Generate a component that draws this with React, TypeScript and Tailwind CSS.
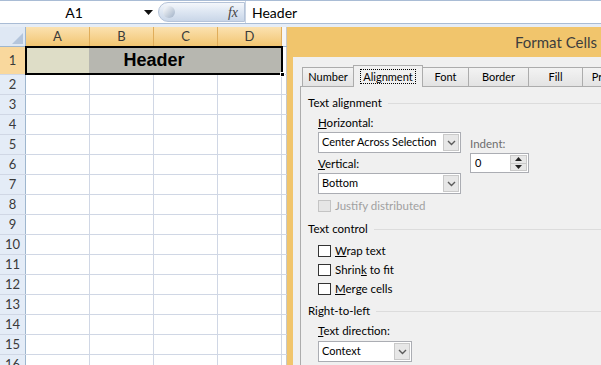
import React from 'react';

const COLS = ['A', 'B', 'C', 'D'];
const ROWS = [2, 3, 4, 5, 6, 7, 8, 9, 10, 11, 12, 13, 14, 15, 16];

const Chevron = () => (
  <svg width="9" height="6" viewBox="0 0 9 6">
    <path d="M1 1 L4.5 4.5 L8 1" fill="none" stroke="#5c5c5c" strokeWidth="1.4" />
  </svg>
);

const Select = ({ value, width }: { value: string; width: string }) => (
  <div className={`${width} h-[21px] flex border border-[#abadb3] bg-white`}>
    <div className="flex-1 flex items-center pl-[3px] text-[11px] text-black whitespace-nowrap overflow-hidden">{value}</div>
    <div className="w-[16px] m-px flex items-center justify-center bg-[#e7e7e7] border border-[#c9c9c9]">
      <Chevron />
    </div>
  </div>
);

const Group = ({ title, mt }: { title: string; mt: string }) => (
  <div className={`flex items-center h-[16px] shrink-0 ${mt}`}>
    <span>{title}</span>
    <div className="flex-1 h-px bg-[#dcdcdc] ml-[6px]" />
  </div>
);

const Check = ({ children, disabled, mt }: { children: React.ReactNode; disabled?: boolean; mt: string }) => (
  <div className={`flex items-center h-[14px] shrink-0 ml-[10px] ${mt}`}>
    <div
      className={`w-[13px] h-[12px] border ${disabled ? 'border-[#c4c4c4] bg-[#e6e6e6]' : 'border-[#333] bg-white'}`}
    />
    <span className={`ml-[4px] ${disabled ? 'text-[#a0a0a0]' : 'text-black'}`}>{children}</span>
  </div>
);

const Tab = ({ label, w, active }: { label: string; w: string; active?: boolean }) =>
  active ? (
    <div className={`${w} h-[22px] -ml-px -mb-px relative z-10 bg-[#f0f0f0] border border-b-0 border-[#acacac] flex items-center justify-center`}>
      <span className="outline-1 outline-dotted outline-black px-[2px] leading-[13px]">{label}</span>
    </div>
  ) : (
    <div className={`${w} h-[19px] -ml-px shrink-0 bg-gradient-to-b from-[#f3f3f3] to-[#e3e3e3] border border-b-0 border-[#acacac] flex items-center justify-center`}>
      {label}
    </div>
  );

export default function App() {
  return (
    <div className="w-[601px] h-[365px] overflow-hidden flex flex-col bg-[#e6edf6] font-['Lato',sans-serif] text-[#222]">
      {/* formula bar */}
      <div className="h-[24px] shrink-0 flex bg-white border-t border-b border-[#a9bcd5]">
        <div className="w-[158px] flex items-center relative">
          <div className="flex-1 text-center text-[14px] pl-[4px] text-black">A1</div>
          <svg width="9" height="5" viewBox="0 0 9 5" className="mr-[5px]">
            <path d="M0 0 H9 L4.5 5 Z" fill="#111" />
          </svg>
        </div>
        <div className="w-[87px] my-[1px] flex items-center rounded-l-full border border-[#b5c3d8] bg-gradient-to-b from-[#f4f7fb] via-[#dde6f2] to-[#c9d6e8]">
          <div className="w-[12px] h-[12px] ml-[4px] rounded-full bg-gradient-to-br from-[#ffffff] to-[#9fb0c6]" />
          <div className="flex-1" />
          <span className="mr-[6px] text-[14px] italic font-['Liberation_Serif',serif] text-[#444]">fx</span>
        </div>
        <div className="flex-1 flex items-center pl-[6px] text-[14px] text-black border-l border-[#c9d4e3]">Header</div>
      </div>
      <div className="h-[3px] shrink-0" />

      <div className="flex flex-1 min-h-0">
        {/* sheet */}
        <div className="w-[287px] shrink-0 bg-white flex flex-col text-[12px] text-[#333]">
          <div className="flex h-[20px] shrink-0 border-b border-[#9eb6ce]">
            <div className="w-[26px] bg-[#dfe8f4] border-r border-[#9eb6ce] flex items-end justify-end p-[2px]">
              <svg width="11" height="11" viewBox="0 0 11 11">
                <path d="M11 0 V11 H0 Z" fill="#b4c5dc" />
              </svg>
            </div>
            {COLS.map((c) => (
              <div
                key={c}
                className="w-[64px] border-r border-[#e0ad5a] bg-gradient-to-b from-[#fbe2b0] to-[#f2c570] flex items-center justify-center text-[13px] text-[#3a3a3a]"
              >
                {c}
              </div>
            ))}
            <div className="flex-1 bg-[#f6f6f6] border-r border-[#c8c8c8]" />
          </div>

          <div className="flex h-[28px] shrink-0 border-b border-[#d0d7e5]">
            <div className="w-[26px] bg-[#f9d89d] border-r border-[#e0ad5a] flex items-center justify-center text-[13px] text-[#3a3a3a]">
              1
            </div>
            <div className="w-[256px] relative flex items-center justify-center font-['Liberation_Sans',sans-serif] font-bold text-[18px] text-black bg-[linear-gradient(to_right,#deddc7_63px,#b7b7b0_63px)]">
              Header
              <div className="absolute -left-px -top-px -right-px -bottom-px border-2 border-black" />
              <div className="absolute -right-[3px] -bottom-[3px] w-[5px] h-[5px] bg-black border border-white" />
            </div>
            <div className="flex-1 border-r border-[#c8c8c8]" />
          </div>

          {ROWS.map((r) => (
            <div key={r} className="flex h-[20px] shrink-0 border-b border-[#d0d7e5]">
              <div className="w-[26px] bg-[#e4ecf7] border-r border-[#9eb6ce] flex items-center justify-center text-[13px] text-[#3a3a3a]">
                {r}
              </div>
              {COLS.map((c) => (
                <div key={c} className="w-[64px] border-r border-[#d0d7e5]" />
              ))}
              <div className="flex-1 border-r border-[#c8c8c8]" />
            </div>
          ))}
        </div>

        {/* dialog */}
        <div className="flex-1 flex flex-col bg-[#f1c56c] pl-[6px] overflow-hidden">
          <div className="h-[30px] shrink-0 flex items-center justify-end pr-[4px] text-[15px] text-[#3d3d3d]">Format Cells</div>
          <div className="flex-1 bg-[#f0f0f0] pl-[7px] pt-[8px] text-[11.5px] text-black overflow-hidden">
            <div className="flex items-end h-[21px] pl-[3px] text-[11px] whitespace-nowrap">
              <Tab label="Number" w="w-[52px]" />
              <Tab label="Alignment" w="w-[70px] shrink-0" active />
              <Tab label="Font" w="w-[47px]" />
              <Tab label="Border" w="w-[61px]" />
              <Tab label="Fill" w="w-[55px]" />
              <Tab label="Protection" w="w-[70px]" />
            </div>
            <div className="h-[300px] border-t border-l border-[#acacac] pl-[7px] flex flex-col">
              <Group title="Text alignment" mt="mt-[8px]" />
              <div className="ml-[10px] mt-[4px] h-[16px] shrink-0 flex items-center">
                <span>
                  <span className="underline">H</span>orizontal:
                </span>
              </div>
              <div className="flex ml-[10px] mt-px shrink-0">
                <div className="flex flex-col">
                  <Select value="Center Across Selection" width="w-[143px]" />
                  <div className="mt-[3px] h-[16px] flex items-center">
                    <span>
                      <span className="underline">V</span>ertical:
                    </span>
                  </div>
                  <div className="mt-px">
                    <Select value="Bottom" width="w-[143px]" />
                  </div>
                </div>
                <div className="flex flex-col ml-[9px]">
                  <div className="mt-[4px] h-[16px] flex items-center text-[#6d6d6d]">Indent:</div>
                  <div className="mt-px w-[59px] h-[20px] flex border border-[#abadb3] bg-white">
                    <div className="flex-1 flex items-center pl-[4px] text-[11px]">0</div>
                    <div className="w-[17px] m-px flex flex-col border border-[#c9c9c9] bg-[#e7e7e7]">
                      <div className="flex-1 flex items-center justify-center border-b border-[#c9c9c9]">
                        <svg width="7" height="4" viewBox="0 0 7 4">
                          <path d="M0 4 L3.5 0 L7 4 Z" fill="#222" />
                        </svg>
                      </div>
                      <div className="flex-1 flex items-center justify-center">
                        <svg width="7" height="4" viewBox="0 0 7 4">
                          <path d="M0 0 L3.5 4 L7 0 Z" fill="#222" />
                        </svg>
                      </div>
                    </div>
                  </div>
                </div>
              </div>
              <Check disabled mt="mt-[5px]">Justify distributed</Check>

              <Group title="Text control" mt="mt-[8px]" />
              <Check mt="mt-[7px]">
                <span className="underline">W</span>rap text
              </Check>
              <Check mt="mt-[5px]">
                Shrin<span className="underline">k</span> to fit
              </Check>
              <Check mt="mt-[5px]">
                <span className="underline">M</span>erge cells
              </Check>

              <Group title="Right-to-left" mt="mt-[7px]" />
              <div className="ml-[10px] mt-[4px] h-[16px] shrink-0 flex items-center">
                <span>
                  <span className="underline">T</span>ext direction:
                </span>
              </div>
              <div className="ml-[10px] mt-[2px] shrink-0">
                <Select value="Context" width="w-[94px]" />
              </div>
            </div>
          </div>
        </div>
      </div>
    </div>
  );
}
